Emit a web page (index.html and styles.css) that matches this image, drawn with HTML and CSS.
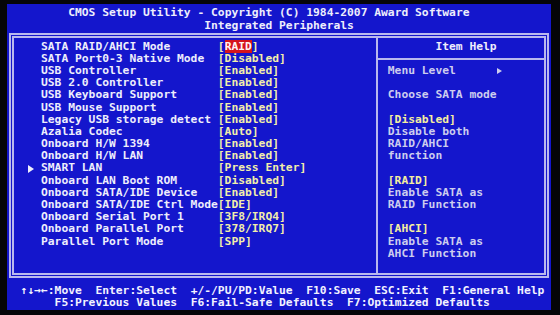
FILE: index.html
```html
<!DOCTYPE html>
<html lang="en">
<head>
  <meta charset="UTF-8" />
  <title>CMOS Setup Utility - Integrated Peripherals</title>
  <link rel="stylesheet" href="styles.css">
</head>
<body>

  <!-- Award BIOS screen, 80 x 25 characters -->
  <div class="screen">
    <div class="title">
      <div class="line t1">CMOS Setup Utility - Copyright (C) 1984-2007 Award Software</div>
      <div class="line t2">Integrated Peripherals</div>
    </div>

    <div class="frame">
      <div class="items">
        <div class="row"><span class="mark"></span><span class="label">SATA RAID/AHCI Mode</span><span class="val">[<span class="sel">RAID</span>]</span></div>
        <div class="row"><span class="mark"></span><span class="label">SATA Port0-3 Native Mode</span><span class="val">[Disabled]</span></div>
        <div class="row"><span class="mark"></span><span class="label">USB Controller</span><span class="val">[Enabled]</span></div>
        <div class="row"><span class="mark"></span><span class="label">USB 2.0 Controller</span><span class="val">[Enabled]</span></div>
        <div class="row"><span class="mark"></span><span class="label">USB Keyboard Support</span><span class="val">[Enabled]</span></div>
        <div class="row"><span class="mark"></span><span class="label">USB Mouse Support</span><span class="val">[Enabled]</span></div>
        <div class="row"><span class="mark"></span><span class="label">Legacy USB storage detect</span><span class="val">[Enabled]</span></div>
        <div class="row"><span class="mark"></span><span class="label">Azalia Codec</span><span class="val">[Auto]</span></div>
        <div class="row"><span class="mark"></span><span class="label">Onboard H/W 1394</span><span class="val">[Enabled]</span></div>
        <div class="row"><span class="mark"></span><span class="label">Onboard H/W LAN</span><span class="val">[Enabled]</span></div>
        <div class="row"><span class="mark"><i class="tri"></i></span><span class="label">SMART LAN</span><span class="val">[Press Enter]</span></div>
        <div class="row"><span class="mark"></span><span class="label">Onboard LAN Boot ROM</span><span class="val">[Disabled]</span></div>
        <div class="row"><span class="mark"></span><span class="label">Onboard SATA/IDE Device</span><span class="val">[Enabled]</span></div>
        <div class="row"><span class="mark"></span><span class="label">Onboard SATA/IDE Ctrl Mode</span><span class="val">[IDE]</span></div>
        <div class="row"><span class="mark"></span><span class="label">Onboard Serial Port 1</span><span class="val">[3F8/IRQ4]</span></div>
        <div class="row"><span class="mark"></span><span class="label">Onboard Parallel Port</span><span class="val">[378/IRQ7]</span></div>
        <div class="row"><span class="mark"></span><span class="label">Parallel Port Mode</span><span class="val">[SPP]</span></div>
      </div>

      <div class="help">
        <div class="help-head">Item Help</div>
        <div class="help-body">
          <div class="row">Menu Level   <i class="tri small"></i></div>
          <div class="row"></div>
          <div class="row">Choose SATA mode</div>
          <div class="row"></div>
          <div class="row opt">[Disabled]</div>
          <div class="row">Disable both</div>
          <div class="row">RAID/AHCI</div>
          <div class="row">function</div>
          <div class="row"></div>
          <div class="row opt">[RAID]</div>
          <div class="row">Enable SATA as</div>
          <div class="row">RAID Function</div>
          <div class="row"></div>
          <div class="row opt">[AHCI]</div>
          <div class="row">Enable SATA as</div>
          <div class="row">AHCI Function</div>
        </div>
      </div>
    </div>

    <div class="keys">
      <div class="line">↑↓→←:Move  Enter:Select  +/-/PU/PD:Value  F10:Save  ESC:Exit  F1:General Help</div>
      <div class="line">     F5:Previous Values  F6:Fail-Safe Defaults  F7:Optimized Defaults</div>
    </div>
  </div>

</body>
</html>
```

FILE: styles.css
```css
* {
  box-sizing: border-box;
}

html, body {
  margin: 0;
  padding: 0;
  background: #050508;
  width: 560px;
  height: 315px;
  overflow: hidden;
}

body {
  padding: 4px 0 0 7px;
}

.screen {
  width: 544px;
  height: 306px;
  background: #1416cc;
  font-family: "DejaVu Sans Mono", "Liberation Mono", monospace;
  font-weight: bold;
  font-size: 11.3px;
  color: #eeeefc;
  padding-top: 1.5px;
}

.line {
  white-space: pre;
}

/* header */
.title .line {
  height: 13px;
  line-height: 13px;
}

.t1 {
  padding-left: 9ch;
}

.t2 {
  padding-left: 29ch;
}

/* main double frame */
.frame {
  margin: 1.5px 2px 0;
  height: 245px;
  border: 5px double #b9b9ee;
  display: grid;
  grid-template-columns: 364px 1fr;
}

.row {
  height: 12.2px;
  line-height: 12.2px;
  white-space: pre;
  display: flex;
  align-items: center;
}

.items {
  border-right: 2px solid #b9b9ee;
  padding: 2.6px 0 0 13.4px;
}

.mark {
  width: 2ch;
  display: flex;
  align-items: center;
}

.label {
  width: 26ch;
}

.val {
  color: #f2eeaa;
}

.sel {
  background: #d4141c;
  color: #fff4f4;
}

.tri {
  display: inline-block;
  width: 0;
  height: 0;
  border-left: 6px solid #eeeefc;
  border-top: 4px solid transparent;
  border-bottom: 4px solid transparent;
  margin-left: 1px;
}

.tri.small {
  border-left-width: 5px;
  border-top-width: 3.5px;
  border-bottom-width: 3.5px;
  border-left-color: #cdcdee;
  margin-left: 3ch;
}

/* item help column */
.help-head {
  height: 22px;
  padding: 2.6px 0 0 57.4px;
  line-height: 12.2px;
  border-bottom: 2px solid #b9b9ee;
  color: #eeeefc;
}

.help-body {
  padding: 5px 0 0 9.8px;
  color: #cdcdee;
}

.help-body .opt {
  color: #f4eea0;
}

/* key legend */
.keys {
  margin-top: 6.6px;
  padding-left: 2ch;
  color: #f2f2ff;
}

.keys .line {
  height: 12.2px;
  line-height: 12.2px;
}
```
